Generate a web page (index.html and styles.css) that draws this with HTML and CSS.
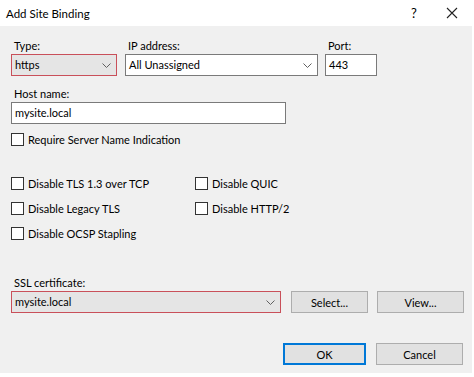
FILE: index.html
```html
<!DOCTYPE html>
<html lang="en">

<head>
    <meta charset="UTF-8">
    <meta name="viewport" content="width=device-width, initial-scale=1.0">
    <title>Add Site Binding</title>
    <link rel="stylesheet" href="styles.css">
</head>

<body>
    <div class="dialog">
        <div class="titlebar">
            <span class="title">Add Site Binding</span>
            <span class="help">?</span>
            <span class="close">
                <svg width="12" height="12" viewBox="0 0 12 12"><path d="M1 1L11 11M11 1L1 11" stroke="#222" stroke-width="1.1" fill="none"/></svg>
            </span>
        </div>
        <div class="content">
            <div class="row top">
                <div class="field type">
                    <label>Type:</label>
                    <div class="select gray invalid">
                        <span>https</span>
                        <svg class="chev" width="9" height="5" viewBox="0 0 9 5"><path d="M0.5 0.5L4.5 4.5L8.5 0.5" stroke="#606060" fill="none"/></svg>
                    </div>
                </div>
                <div class="field ip">
                    <label>IP address:</label>
                    <div class="select">
                        <span>All Unassigned</span>
                        <svg class="chev" width="9" height="5" viewBox="0 0 9 5"><path d="M0.5 0.5L4.5 4.5L8.5 0.5" stroke="#606060" fill="none"/></svg>
                    </div>
                </div>
                <div class="field port">
                    <label>Port:</label>
                    <div class="textbox">443</div>
                </div>
            </div>

            <div class="field host">
                <label>Host name:</label>
                <div class="textbox">mysite.local</div>
            </div>

            <div class="check sni"><span class="box"></span>Require Server Name Indication</div>

            <div class="checks">
                <div class="check"><span class="box"></span>Disable TLS 1.3 over TCP</div>
                <div class="check"><span class="box"></span>Disable QUIC</div>
                <div class="check"><span class="box"></span>Disable Legacy TLS</div>
                <div class="check"><span class="box"></span>Disable HTTP/2</div>
                <div class="check"><span class="box"></span>Disable OCSP Stapling</div>
            </div>

            <div class="field ssl">
                <label>SSL certificate:</label>
                <div class="ssl-row">
                    <div class="select gray invalid cert">
                        <span>mysite.local</span>
                        <svg class="chev" width="9" height="5" viewBox="0 0 9 5"><path d="M0.5 0.5L4.5 4.5L8.5 0.5" stroke="#606060" fill="none"/></svg>
                    </div>
                    <button class="btn select-btn">Select...</button>
                    <button class="btn view-btn">View...</button>
                </div>
            </div>

            <div class="footer">
                <button class="btn ok">OK</button>
                <button class="btn cancel">Cancel</button>
            </div>
        </div>
    </div>
</body>

</html>
```

FILE: styles.css
```css
* {
    margin: 0;
    padding: 0;
    box-sizing: border-box;
}

body {
    background-color: #fff;
    font-family: Lato, "Noto Sans", sans-serif;
    font-size: 11px;
    color: #000;
}

.dialog {
    width: 472px;
}

.titlebar {
    height: 26px;
    display: flex;
    align-items: center;
    padding-left: 6px;
    background-color: #fff;
}

.title {
    flex: 1;
    font-size: 11.5px;
}

.help {
    width: 14px;
    margin-right: 21px;
    font-size: 13px;
}

.close {
    display: flex;
    margin-right: 14px;
}

.content {
    height: 347px;
    background-color: #f0f0f0;
    padding: 12px 0 0 11px;
}

label {
    display: block;
    height: 16px;
    line-height: 16px;
    padding-left: 3px;
}

.row {
    display: flex;
}

.type {
    width: 106px;
    margin-right: 8px;
}

.ip {
    width: 193px;
    margin-right: 7px;
}

.port {
    width: 52px;
}

.select,
.textbox {
    height: 22px;
    border: 1px solid #7a7a7a;
    background-color: #fff;
    display: flex;
    align-items: center;
    padding-left: 3px;
    line-height: 20px;
}

.select span {
    flex: 1;
}

.select .chev {
    margin-right: 5px;
}

.select.gray {
    background-color: #e5e5e5;
}

.select.invalid {
    border-color: #c9505a;
}

.host {
    margin-top: 10px;
    width: 275px;
}

.check {
    display: flex;
    align-items: center;
    height: 13px;
    line-height: 13px;
}

.check .box {
    width: 13px;
    height: 13px;
    border: 1px solid #333;
    background-color: #fff;
    margin-right: 4px;
}

.sni {
    margin-top: 9px;
}

.checks {
    margin-top: 31px;
    display: grid;
    grid-template-columns: 184px auto;
    row-gap: 12px;
}

.ssl {
    margin-top: 35px;
}

.ssl-row {
    display: flex;
}

.cert {
    width: 270px;
    margin-right: 10px;
}

.btn {
    height: 22px;
    border: 1px solid #adadad;
    background-color: #e1e1e1;
    font-family: Lato, "Noto Sans", sans-serif;
    font-size: 11px;
    color: #000;
}

.select-btn {
    width: 77px;
    margin-right: 9px;
}

.view-btn {
    width: 87px;
}

.footer {
    margin-top: 30px;
    display: flex;
    padding-left: 272px;
}

.ok {
    width: 83px;
    margin-right: 10px;
    border: 2px solid #0078d7;
}

.cancel {
    width: 87px;
}
```
